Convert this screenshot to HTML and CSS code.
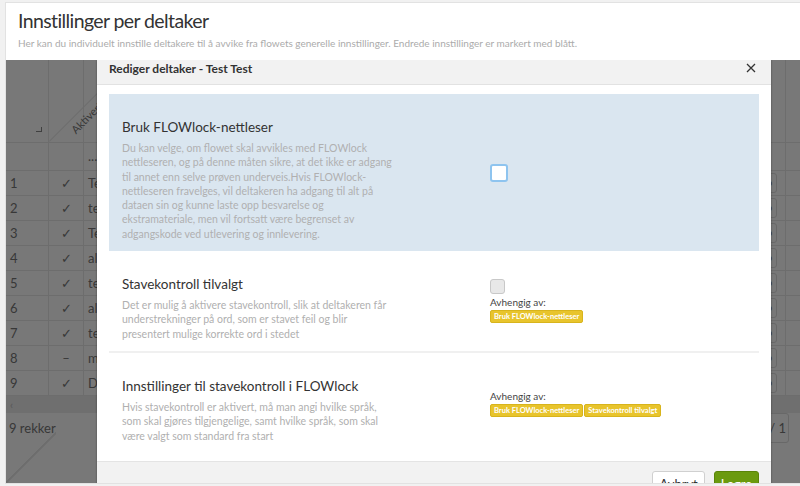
FILE: index.html
```html
<html>
<head>
    <meta charset="utf-8">
    <link rel="stylesheet" href="styles.css">
</head>
<body>
<div class="card">
    <div class="page-head">
        <h1>Innstillinger per deltaker</h1>
        <p>Her kan du individuelt innstille deltakere til å avvike fra flowets generelle innstillinger. Endrede innstillinger er markert med blått.</p>
    </div>
    <div class="stage">
        <table class="grid">
            <tr class="head">
                <th class="num"><span class="corner"></span></th>
                <th class="chk"><span class="slant">Aktivert</span></th>
                <th class="name"></th>
                <th class="act"></th>
                <th class="tail"></th>
            </tr>
            <tr class="filter">
                <td class="num"></td>
                <td class="chk"></td>
                <td class="name">...</td>
                <td class="act"></td>
                <td class="tail"></td>
            </tr>
            <tr><td class="num">1</td><td class="chk">&#10003;</td><td class="name">Test</td><td class="act"><span class="btn-mini">o</span></td><td class="tail"></td></tr>
            <tr><td class="num">2</td><td class="chk">&#10003;</td><td class="name">test</td><td class="act"><span class="btn-mini">o</span></td><td class="tail"></td></tr>
            <tr><td class="num">3</td><td class="chk">&#10003;</td><td class="name">Test</td><td class="act"><span class="btn-mini">o</span></td><td class="tail"></td></tr>
            <tr><td class="num">4</td><td class="chk">&#10003;</td><td class="name">alfa</td><td class="act"><span class="btn-mini">o</span></td><td class="tail"></td></tr>
            <tr><td class="num">5</td><td class="chk">&#10003;</td><td class="name">test</td><td class="act"><span class="btn-mini">o</span></td><td class="tail"></td></tr>
            <tr><td class="num">6</td><td class="chk">&#10003;</td><td class="name">alfa</td><td class="act"><span class="btn-mini">o</span></td><td class="tail"></td></tr>
            <tr><td class="num">7</td><td class="chk">&#10003;</td><td class="name">test</td><td class="act"><span class="btn-mini">o</span></td><td class="tail"></td></tr>
            <tr><td class="num">8</td><td class="chk">&ndash;</td><td class="name">mt</td><td class="act"><span class="btn-mini">o</span></td><td class="tail"></td></tr>
            <tr><td class="num">9</td><td class="chk">&#10003;</td><td class="name">Demo</td><td class="act"><span class="btn-mini">o</span></td><td class="tail"></td></tr>
        </table>
        <div class="scrollbar">&lsaquo;</div>
        <div class="grid-foot">
            <span class="count">9 rekker</span>
            <span class="pager">/ 1</span>
        </div>

        <div class="backdrop"></div>

        <div class="dialog">
            <div class="dialog-head">
                <span>Rediger deltaker - Test Test</span>
                <svg class="close" width="10" height="10" viewBox="0 0 10 10">
                    <path d="M1 1 L9 9 M9 1 L1 9" stroke="#333" stroke-width="1.3" fill="none"/>
                </svg>
            </div>
            <div class="dialog-body">
                <div class="setting changed">
                    <div class="setting-text">
                        <h3>Bruk FLOWlock-nettleser</h3>
                        <p>Du kan velge, om flowet skal avvikles med FLOWlock<br>
                        nettleseren, og på denne måten sikre, at det ikke er adgang<br>
                        til annet enn selve prøven underveis.Hvis FLOWlock-<br>
                        nettleseren fravelges, vil deltakeren ha adgang til alt på<br>
                        dataen sin og kunne laste opp besvarelse og<br>
                        ekstramateriale, men vil fortsatt være begrenset av<br>
                        adgangskode ved utlevering og innlevering.</p>
                    </div>
                    <div class="setting-ctrl">
                        <span class="box focus"></span>
                    </div>
                </div>
                <div class="setting">
                    <div class="setting-text">
                        <h3>Stavekontroll tilvalgt</h3>
                        <p>Det er mulig å aktivere stavekontroll, slik at deltakeren får<br>
                        understrekninger på ord, som er stavet feil og blir<br>
                        presentert mulige korrekte ord i stedet</p>
                    </div>
                    <div class="setting-ctrl">
                        <span class="box disabled"></span>
                        <div class="dep-label">Avhengig av:</div>
                        <div class="deps"><span class="dep">Bruk FLOWlock-nettleser</span></div>
                    </div>
                </div>
                <div class="setting">
                    <div class="setting-text">
                        <h3>Innstillinger til stavekontroll i FLOWlock</h3>
                        <p>Hvis stavekontroll er aktivert, må man angi hvilke språk,<br>
                        som skal gjøres tilgjengelige, samt hvilke språk, som skal<br>
                        være valgt som standard fra start</p>
                    </div>
                    <div class="setting-ctrl">
                        <div class="dep-label">Avhengig av:</div>
                        <div class="deps"><span class="dep">Bruk FLOWlock-nettleser</span><span class="dep">Stavekontroll tilvalgt</span></div>
                    </div>
                </div>
            </div>
            <div class="dialog-foot">
                <button class="btn">Avbryt</button>
                <button class="btn primary">Lagre</button>
            </div>
        </div>
    </div>
</div>
</body>
</html>
```

FILE: styles.css
```css
body{
    margin: 0;
    background-color: #f1f1f1;
    color: #333;
    font-family: Lato, "Open Sans", sans-serif;
    overflow: hidden;
}

.card{
    margin: 2px -20px 0 5px;
    height: 480px;
    background-color: white;
    border: 1px solid #e2e2e2;
    overflow: hidden;
}

/* page header */

.page-head{
    height: 57px;
    padding: 0 12px;
}

.page-head h1{
    margin: 0;
    padding-top: 5px;
    font-size: 19.5px;
    font-weight: 400;
    letter-spacing: -0.6px;
    line-height: 26px;
}

.page-head p{
    margin: 3px 0 0 0;
    font-size: 10px;
    color: #ababab;
}

/* grid behind the dialog */

.stage{
    position: relative;
    height: 423px;
    overflow: hidden;
}

.grid{
    width: 100%;
    border-collapse: collapse;
    font-size: 13px;
    color: #777;
}

.grid td,
.grid th{
    padding: 0 4px;
    border-bottom: 1px solid #e8e8e8;
    text-align: left;
    color: #777;
}

.grid .head th{
    height: 82px;
    vertical-align: bottom;
    position: relative;
}

.grid .filter td{
    height: 28px;
}

.grid tr td{
    height: 25px;
}

.grid .num{
    width: 34px;
    border-right: 1px solid #e8e8e8;
}

.grid .chk{
    width: 26px;
    text-align: center;
    border-right: 1px solid #e8e8e8;
}

.grid .act{
    width: 14px;
    padding: 0 8px 0 4px;
}

.grid .tail{
    width: 25px;
    border-left: 1px solid #e8e8e8;
}

.corner{
    display: inline-block;
    margin: 0 0 10px 26px;
    width: 5px;
    height: 4px;
    border-right: 1px solid #888;
    border-bottom: 1px solid #888;
}

.grid .chk:before{
    content: "";
    position: absolute;
    left: 0;
    bottom: 0;
    width: 70px;
    border-top: 1px solid #e8e8e8;
    transform-origin: left top;
    transform: rotate(-45deg);
}

.slant{
    position: absolute;
    left: 18px;
    bottom: 18px;
    font-size: 11px;
    font-weight: 400;
    transform: rotate(-45deg);
}

.btn-mini{
    display: inline-block;
    height: 18px;
    padding: 0 4px;
    border: 1px solid #ddd;
    border-radius: 3px;
    font-size: 9px;
    line-height: 18px;
}

.scrollbar{
    height: 17px;
    padding-left: 4px;
    background-color: #ececec;
    color: #bbb;
    font-size: 11px;
    line-height: 17px;
}

.grid-foot{
    display: flex;
    justify-content: space-between;
    align-items: center;
    height: 30px;
    padding: 0 30px 0 3px;
    font-size: 13px;
    color: #777;
}

.pager{
    padding: 6px 2px 6px 5px;
    border: 1px solid #ddd;
    border-radius: 3px;
}

.backdrop{
    position: absolute;
    top: 0;
    left: 0;
    right: 0;
    bottom: 0;
    background-color: rgba(0, 0, 0, 0.53);
}

/* dialog */

.dialog{
    position: absolute;
    top: 0;
    left: 91px;
    width: 674px;
    background-color: white;
    box-shadow: 0 0 2px rgba(0, 0, 0, 0.4);
}

.dialog-head{
    display: flex;
    justify-content: space-between;
    height: 24px;
    padding: 0 15px 0 12px;
    background-color: #f2f2f2;
    border-bottom: 1px solid #e2e2e2;
    font-size: 12px;
    font-weight: 700;
    line-height: 17px;
}

.close{
    margin-top: 3px;
}

.dialog-body{
    padding: 9px 12px 8px 12px;
}

.setting{
    display: flex;
    align-items: center;
    padding: 0 13px;
    border-bottom: 2px solid #f0f0f0;
}

.setting:last-child{
    border-bottom: none;
}

.setting.changed{
    background-color: #dae6f0;
    border-bottom: none;
}

.setting-text{
    width: 262px;
    padding: 23px 0 10px 0;
}

.setting-text h3{
    margin: 0 0 4px 0;
    font-size: 13.5px;
    font-weight: 400;
    line-height: 20px;
    color: #333;
}

.setting-text p{
    margin: 0;
    font-size: 10.5px;
    line-height: 14.3px;
    color: #b0b0b0;
    white-space: nowrap;
}

.setting-ctrl{
    margin-left: 106px;
}

.box{
    display: block;
    width: 13px;
    height: 13px;
    border: 1px solid #c8c8c8;
    border-radius: 3px;
    background-color: #e8e8e8;
}

.box.focus{
    width: 14px;
    height: 14px;
    border: 2px solid #8ec4ef;
    background-color: white;
    border-radius: 3px;
}

.dep-label{
    margin-top: 2px;
    font-size: 10px;
    color: #444;
}

.deps{
    display: flex;
    gap: 1px;
    margin-top: 2px;
}

.dep{
    padding: 0 3px;
    height: 11px;
    border: 1px solid #d8b41c;
    border-radius: 2px;
    background-color: #e8c42c;
    color: white;
    font-size: 7.5px;
    font-weight: 700;
    line-height: 11px;
}

.dialog-foot{
    display: flex;
    justify-content: flex-end;
    gap: 9px;
    padding: 9px 12px 9px 12px;
    background-color: #f2f2f2;
    border-top: 1px solid #e4e4e4;
}

.btn{
    height: 26px;
    padding: 0 6px;
    border: 1px solid #d0d0d0;
    border-radius: 3px;
    background-color: white;
    color: #333;
    font-family: Lato, "Open Sans", sans-serif;
    font-size: 13px;
}

.btn.primary{
    border-color: #5a8409;
    background-color: #6b9a0f;
    color: white;
}
```
